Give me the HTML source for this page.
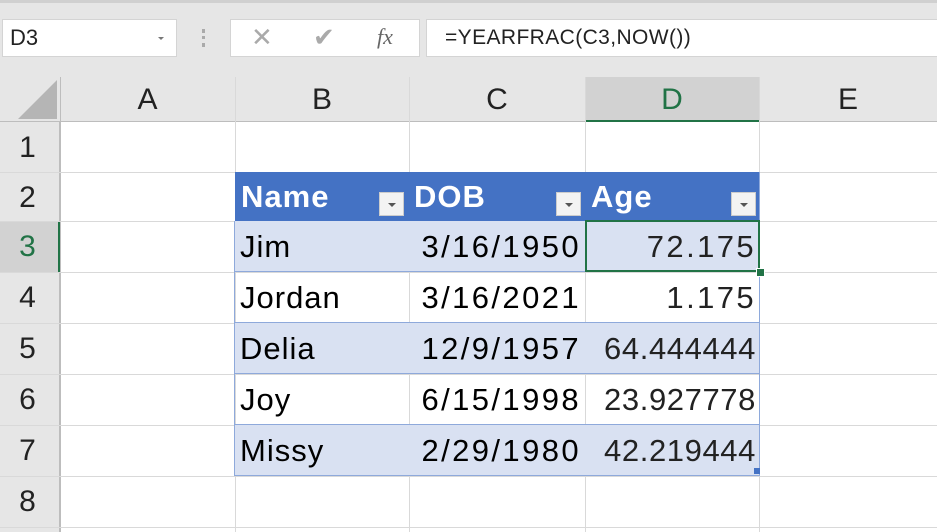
<!DOCTYPE html><html><head><style>
body{margin:0;width:937px;height:532px;overflow:hidden;background:#fff;font-family:"Liberation Sans",sans-serif;position:relative}
.a{position:absolute}
.t{font-size:31px;letter-spacing:2.4px;color:#000;white-space:nowrap;line-height:51px}
.n{letter-spacing:1px}
.r{text-align:right}
.hd{font-size:30px;color:#222;text-align:center;line-height:45px}
.rh{font-size:30px;color:#222;text-align:center;line-height:51px}
.dd{position:absolute;width:25px;height:24px;background:#f3f3f3;border:1px solid #ccc;box-sizing:border-box}
.dd:after{content:"";position:absolute;left:8px;top:10px;border-left:4px solid transparent;border-right:4px solid transparent;border-top:4px solid #555}
</style></head><body>
<div class="a" style="left:0;top:0;width:937px;height:77px;background:#e6e6e6"></div>
<div class="a" style="left:0;top:0;width:937px;height:3px;background:#d0d0d0"></div>
<div class="a" style="left:2px;top:19px;width:175px;height:38px;background:#fff;border:1px solid #d4d4d4;box-sizing:border-box;font-size:22px;line-height:36px;padding-left:7px;color:#222">D3</div>
<div class="a" style="left:158px;top:37px;border-left:3px solid transparent;border-right:3px solid transparent;border-top:3px solid #777"></div>
<div class="a" style="left:202px;top:29px;width:3px;height:18px;border-left:3px dotted #aaa"></div>
<div class="a" style="left:230px;top:19px;width:190px;height:38px;background:#fff;border:1px solid #d4d4d4;box-sizing:border-box"></div>
<div class="a" style="left:251px;top:22px;font-size:26px;color:#aaa">✕</div>
<div class="a" style="left:313px;top:22px;font-size:26px;color:#aaa">✔</div>
<div class="a" style="left:377px;top:24px;font-size:22px;color:#666;font-family:'Liberation Serif',serif;font-style:italic">fx</div>
<div class="a" style="left:426px;top:19px;width:511px;height:38px;background:#fff;border:1px solid #d4d4d4;border-right:none;box-sizing:border-box;font-size:21px;line-height:36px;padding-left:18px;color:#222;letter-spacing:0.4px">=YEARFRAC(C3,NOW())</div>
<div class="a" style="left:0;top:77px;width:937px;height:45px;background:#e6e6e6;border-bottom:1px solid #bdbdbd;box-sizing:border-box"></div>
<div class="a" style="left:18px;top:80px;width:0;height:0;border-left:39px solid transparent;border-bottom:39px solid #b5b5b5"></div>
<div class="a" style="left:585px;top:77px;width:174px;height:45px;background:#d2d2d2;border-bottom:2px solid #217346;box-sizing:border-box"></div>
<div class="a hd" style="left:60px;top:77px;width:175px">A</div>
<div class="a hd" style="left:235px;top:77px;width:174px">B</div>
<div class="a hd" style="left:409px;top:77px;width:176px">C</div>
<div class="a hd" style="left:585px;top:77px;width:174px;color:#217346">D</div>
<div class="a hd" style="left:759px;top:77px;width:178px">E</div>
<div class="a" style="left:0;top:122px;width:60px;height:410px;background:#e6e6e6;border-right:1px solid #bdbdbd;box-sizing:border-box"></div>
<div class="a" style="left:0;top:221px;width:60px;height:51px;background:#d2d2d2;border-right:2px solid #217346;box-sizing:border-box"></div>
<svg class="a" style="left:0;top:77px" width="937" height="455">
<g stroke="#d9d9d9" stroke-width="1">
<line x1="60.5" y1="0" x2="60.5" y2="455" stroke="#bdbdbd"/>
<line x1="235.5" y1="0" x2="235.5" y2="455"/><line x1="409.5" y1="0" x2="409.5" y2="455"/><line x1="585.5" y1="0" x2="585.5" y2="455"/><line x1="759.5" y1="0" x2="759.5" y2="455"/>
<line x1="0" y1="95.5" x2="937" y2="95.5"/><line x1="0" y1="144.5" x2="937" y2="144.5"/><line x1="0" y1="195.5" x2="937" y2="195.5"/><line x1="0" y1="246.5" x2="937" y2="246.5"/><line x1="0" y1="297.5" x2="937" y2="297.5"/><line x1="0" y1="348.5" x2="937" y2="348.5"/><line x1="0" y1="399.5" x2="937" y2="399.5"/><line x1="0" y1="450.5" x2="937" y2="450.5"/>
</g></svg>
<div class="a" style="left:235px;top:172px;width:525px;height:49px;background:#4472c4"></div>
<div class="a" style="left:235px;top:221px;width:525px;height:51px;background:#d9e1f2;border-bottom:1px solid #8ea9db;box-sizing:border-box"></div>
<div class="a" style="left:235px;top:272px;width:525px;height:51px;border-bottom:1px solid #8ea9db;box-sizing:border-box"></div>
<div class="a" style="left:235px;top:323px;width:525px;height:51px;background:#d9e1f2;border-bottom:1px solid #8ea9db;box-sizing:border-box"></div>
<div class="a" style="left:235px;top:374px;width:525px;height:51px;border-bottom:1px solid #8ea9db;box-sizing:border-box"></div>
<div class="a" style="left:235px;top:425px;width:525px;height:51px;background:#d9e1f2;border-bottom:1px solid #8ea9db;box-sizing:border-box"></div>
<div class="a" style="left:759px;top:172px;width:1px;height:304px;background:#8ea9db"></div>
<div class="a" style="left:234px;top:221px;width:1px;height:255px;background:#8ea9db"></div>
<div class="a t" style="left:241px;top:172px;line-height:50px;color:#fff;font-weight:bold;letter-spacing:1px">Name</div>
<div class="a t" style="left:414px;top:172px;line-height:50px;color:#fff;font-weight:bold;letter-spacing:1px">DOB</div>
<div class="a t" style="left:591px;top:172px;line-height:50px;color:#fff;font-weight:bold;letter-spacing:1px">Age</div>
<div class="dd" style="left:379px;top:192px"></div>
<div class="dd" style="left:556px;top:192px"></div>
<div class="dd" style="left:731px;top:192px"></div>
<div class="a" style="left:585px;top:220px;width:175px;height:52px;border:2px solid #217346;box-sizing:border-box"></div>
<div class="a" style="left:756px;top:268px;width:7px;height:7px;background:#217346;border:1px solid #fff"></div>
<div class="a" style="left:754px;top:468px;width:6px;height:6px;background:#4472c4"></div>
<div class="a t n" style="left:240px;top:221px">Jim</div>
<div class="a t n" style="left:240px;top:272px">Jordan</div>
<div class="a t n" style="left:240px;top:323px">Delia</div>
<div class="a t n" style="left:240px;top:374px">Joy</div>
<div class="a t n" style="left:240px;top:425px">Missy</div>
<div class="a t r" style="left:400px;top:221px;width:181px">3/16/1950</div>
<div class="a t r" style="left:400px;top:272px;width:181px">3/16/2021</div>
<div class="a t r" style="left:400px;top:323px;width:181px">12/9/1957</div>
<div class="a t r" style="left:400px;top:374px;width:181px">6/15/1998</div>
<div class="a t r" style="left:400px;top:425px;width:181px">2/29/1980</div>
<div class="a t r" style="left:560px;top:221px;width:196px;color:#222">72.175</div>
<div class="a t r" style="left:560px;top:272px;width:196px;color:#222">1.175</div>
<div class="a t r" style="left:560px;top:323px;width:196px;color:#222;letter-spacing:0.6px">64.444444</div>
<div class="a t r" style="left:560px;top:374px;width:196px;color:#222;letter-spacing:0.6px">23.927778</div>
<div class="a t r" style="left:560px;top:425px;width:196px;color:#222;letter-spacing:0.6px">42.219444</div>
<div class="a rh" style="left:0;top:122px;width:55px">1</div>
<div class="a rh" style="left:0;top:172px;width:55px">2</div>
<div class="a rh" style="left:0;top:221px;width:55px;color:#217346">3</div>
<div class="a rh" style="left:0;top:272px;width:55px">4</div>
<div class="a rh" style="left:0;top:323px;width:55px">5</div>
<div class="a rh" style="left:0;top:374px;width:55px">6</div>
<div class="a rh" style="left:0;top:425px;width:55px">7</div>
<div class="a rh" style="left:0;top:476px;width:55px">8</div>
</body></html>
